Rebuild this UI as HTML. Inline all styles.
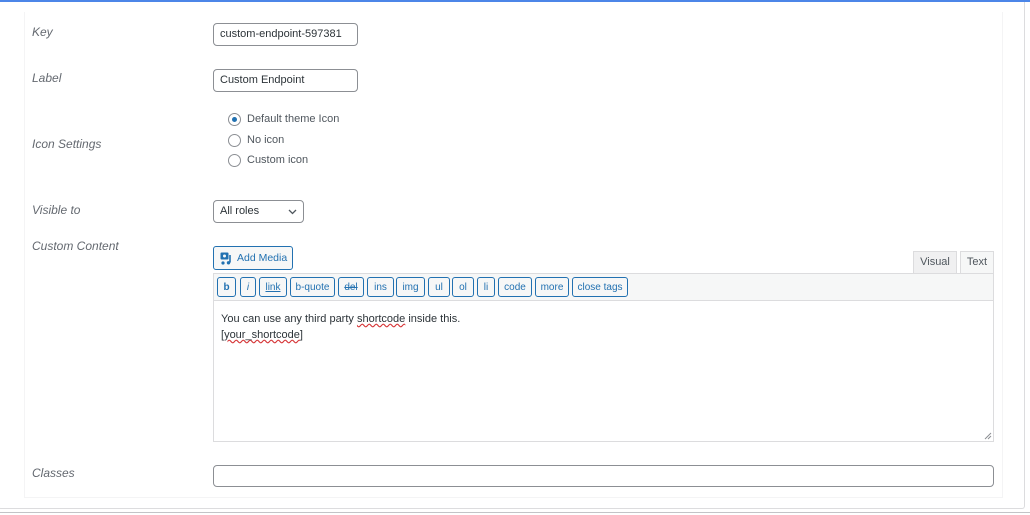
<!DOCTYPE html>
<html><head><meta charset="utf-8"><style>
*{box-sizing:border-box;margin:0;padding:0}
body{width:1030px;height:515px;background:#fff;font-family:"Liberation Sans",Arial,sans-serif;position:relative;overflow:hidden;color:#2c3338}
.a{position:absolute}
.lbl{position:absolute;left:32px;font-size:12px;font-style:italic;color:#646970}
.inp{position:absolute;border:1px solid #8c8f94;border-radius:4px;background:#fff;font-size:11px;color:#2c3338;padding-left:6px;line-height:21px}
.rad{position:absolute;left:228px;width:13px;height:13px;border:1px solid #8c8f94;border-radius:50%;background:#fff}
.rt{position:absolute;left:247px;font-size:11px;color:#50575e}
.tb{position:absolute;top:277px;height:20px;border:1px solid #2271b1;border-radius:3px;background:#f6f7f7;color:#2271b1;font-size:10px;text-align:center;line-height:19px}
</style></head><body>
<div class="a" style="left:0;top:0;width:1030px;height:2px;background:#4c86e8"></div>
<div class="a" style="left:-2px;top:2px;width:1027px;height:507px;border:1px solid #dcdcde;border-top:none;border-radius:0 0 3px 3px"></div>
<div class="a" style="left:0;top:512px;width:1030px;height:3px;border-top:1px solid #c3c4c7"></div>
<div class="a" style="left:24px;top:12px;width:979px;height:486px;border:1px solid #f4f4f5;border-top:none"></div>

<div class="lbl" style="top:25px">Key</div>
<div class="inp" style="left:213px;top:23px;width:145px;height:23px">custom-endpoint-597381</div>
<div class="lbl" style="top:71px">Label</div>
<div class="inp" style="left:213px;top:69px;width:145px;height:23px">Custom Endpoint</div>

<div class="lbl" style="top:137px">Icon Settings</div>
<div class="rad" style="top:113px"><div class="a" style="left:3px;top:3px;width:5px;height:5px;border-radius:50%;background:#2271b1"></div></div>
<div class="rt" style="top:113px">Default theme Icon</div>
<div class="rad" style="top:134px"></div>
<div class="rt" style="top:134px">No icon</div>
<div class="rad" style="top:154px"></div>
<div class="rt" style="top:154px">Custom icon</div>

<div class="lbl" style="top:203px">Visible to</div>
<div class="inp" style="left:213px;top:200px;width:91px;height:23px;line-height:21px">All roles
<svg class="a" style="left:74px;top:8px" width="9" height="6" viewBox="0 0 9 6"><path d="M1 1l3.5 3.5L8 1" fill="none" stroke="#50575e" stroke-width="1.3"/></svg></div>

<div class="lbl" style="top:239px">Custom Content</div>
<div class="a" style="left:213px;top:246px;width:80px;height:24px;border:1px solid #2271b1;border-radius:3px;background:#f6f7f7;color:#2271b1;font-size:10.5px;line-height:22px;padding-left:23px">Add Media
<svg class="a" style="left:6px;top:5px" width="13" height="13" viewBox="0 0 13 13"><rect x="0.5" y="0.5" width="8" height="7" rx="1" fill="#2271b1"/><circle cx="4.5" cy="4" r="1.5" fill="#f6f7f7"/><path d="M10 3v7.5" stroke="#2271b1" stroke-width="1.6"/><circle cx="8.5" cy="10.8" r="1.7" fill="#2271b1"/><circle cx="3" cy="11" r="1.6" fill="#2271b1"/></svg></div>

<div class="a" style="left:913px;top:251px;width:44px;height:23px;background:#f0f0f1;border:1px solid #dcdcde;font-size:11px;color:#50575e;text-align:center;line-height:21px">Visual</div>
<div class="a" style="left:960px;top:251px;width:34px;height:23px;background:#f6f7f7;border:1px solid #dcdcde;border-bottom:none;font-size:11px;color:#50575e;text-align:center;line-height:21px">Text</div>
<div class="a" style="left:213px;top:273px;width:781px;height:169px;border:1px solid #dcdcde;background:#fff"></div>
<div class="a" style="left:214px;top:274px;width:779px;height:27px;background:#f6f7f7;border-bottom:1px solid #dcdcde"></div>
<div class="tb" style="left:217px;width:19px;font-weight:bold">b</div>
<div class="tb" style="left:240px;width:16px;font-style:italic">i</div>
<div class="tb" style="left:259px;width:28px;text-decoration:underline">link</div>
<div class="tb" style="left:290px;width:45px">b-quote</div>
<div class="tb" style="left:338px;width:26px;text-decoration:line-through">del</div>
<div class="tb" style="left:367px;width:27px">ins</div>
<div class="tb" style="left:396px;width:29px">img</div>
<div class="tb" style="left:428px;width:22px">ul</div>
<div class="tb" style="left:452px;width:22px">ol</div>
<div class="tb" style="left:477px;width:18px">li</div>
<div class="tb" style="left:498px;width:34px">code</div>
<div class="tb" style="left:535px;width:34px">more</div>
<div class="tb" style="left:572px;width:56px">close tags</div>
<div class="a" style="left:221px;top:311px;font-size:11px;line-height:16px;color:#2c3338">You can use any third party <span style="text-decoration:underline wavy #d63638">shortcode</span> inside this.<br>[<span style="text-decoration:underline wavy #d63638">your_shortcode</span>]</div>
<svg class="a" style="left:984px;top:432px" width="8" height="8"><path d="M7 1L1 7M7 4L4 7" stroke="#8c8f94" stroke-width="1"/></svg>

<div class="lbl" style="top:466px">Classes</div>
<div class="inp" style="left:213px;top:465px;width:781px;height:22px"></div>
</body></html>
